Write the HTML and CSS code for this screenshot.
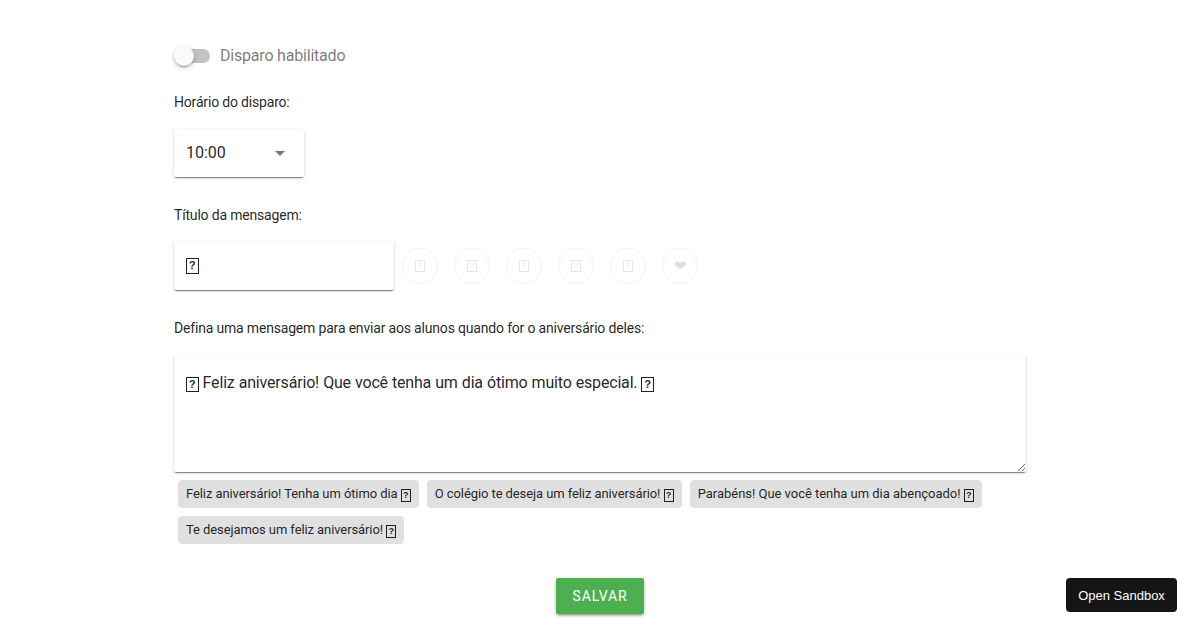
FILE: index.html
```html
<!DOCTYPE html>
<html lang="pt-BR">
<head>
<meta charset="utf-8">
<title>Disparo</title>
<link rel="stylesheet" href="styles.css">
</head>
<body>
<main class="form">
  <div class="toggle-row">
    <span class="switch"><span class="track"></span><span class="thumb"></span></span>
    <span class="toggle-label">Disparo habilitado</span>
  </div>
  <p class="label label-time">Horário do disparo:</p>
  <div class="paper select">
    <span>10:00</span>
    <svg class="arrow" viewBox="0 0 24 24" width="24" height="24"><path d="M7 10l5 5 5-5z"/></svg>
  </div>
  <p class="label label-title">Título da mensagem:</p>
  <div class="title-row">
    <div class="paper title-input"><span class="tofu">?</span></div>
    <div class="emojis">
      <span class="emoji"><span class="tofu">?</span></span>
      <span class="emoji"><span class="tofu">?</span></span>
      <span class="emoji"><span class="tofu">?</span></span>
      <span class="emoji"><span class="tofu">?</span></span>
      <span class="emoji"><span class="tofu">?</span></span>
      <span class="emoji emoji-heart">❤</span>
    </div>
  </div>
  <p class="label label-message">Defina uma mensagem para enviar aos alunos quando for o aniversário deles:</p>
  <div class="paper message"><span class="tofu">?</span> Feliz aniversário! Que você tenha um dia ótimo muito especial. <span class="tofu">?</span></div>
  <div class="chips">
    <span class="chip"><span>Feliz aniversário! Tenha um ótimo dia <span class="tofu">?</span></span></span>
    <span class="chip"><span>O colégio te deseja um feliz aniversário! <span class="tofu">?</span></span></span>
    <span class="chip chip-wide"><span>Parabéns! Que você tenha um dia abençoado! <span class="tofu">?</span></span></span>
    <span class="chip"><span>Te desejamos um feliz aniversário! <span class="tofu">?</span></span></span>
  </div>
  <div class="actions"><button class="save" type="button">Salvar</button></div>
</main>
<a class="sandbox">Open Sandbox</a>
</body>
</html>
```
FILE: styles.css
```css
* { box-sizing: border-box; }
html, body { margin: 0; height: 630px; overflow: hidden; background: #fff; }
body { font-family: Roboto, "Liberation Sans", sans-serif; color: rgba(0,0,0,.87); }
.form { width: 852px; margin: 0 auto; padding-top: 37px; display: flex; flex-direction: column; }
.toggle-row { display: flex; align-items: center; height: 38px; }
.switch { position: relative; display: block; width: 36px; height: 38px; margin-right: 10px; }
.track { position: absolute; left: 2px; top: 12px; width: 34px; height: 14px; border-radius: 7px; background: #000; opacity: .24; }
.thumb { position: absolute; left: 0; top: 9px; width: 20px; height: 20px; border-radius: 50%; background: #fafafa; box-shadow: 0 1px 5px rgba(0,0,0,.2), 0 2px 2px rgba(0,0,0,.14), 0 3px 1px -2px rgba(0,0,0,.12); }
.toggle-label { font-size: 16px; line-height: 24px; letter-spacing: -.2px; color: rgba(0,0,0,.54); }
.label { margin: 0; font-size: 14px; line-height: 20px; letter-spacing: -.18px; }
.label-time { margin-top: 17px; }
.label-title { margin-top: 28px; }
.label-message { margin-top: 28px; }
.paper { background: #fff; border-radius: 2px; box-shadow: 0 2px 1px -1px rgba(0,0,0,.4), 0 1px 3px rgba(0,0,0,.2), 0 0 1px rgba(0,0,0,.08); }
.select { margin-top: 17px; width: 130px; height: 48px; padding: 0 12px 2px; display: flex; align-items: center; justify-content: space-between; font-size: 16px; }
.arrow { fill: rgba(0,0,0,.54); margin-top: 2px; }
.title-row { margin-top: 17px; display: flex; align-items: center; }
.title-input { width: 220px; height: 48px; padding: 0 12px; display: flex; align-items: center; font-size: 16px; }
.emojis { display: flex; gap: 16px; margin-left: 8px; }
.emoji { width: 36px; height: 36px; border: 1px solid rgba(0,0,0,.06); border-radius: 50%; display: flex; align-items: center; justify-content: center; font-size: 13px; color: rgba(0,0,0,.1); }
.emoji-heart { font-size: 15px; color: rgba(0,0,0,.13); }
.tofu { display: inline-flex; align-items: center; justify-content: center; width: 1.12em; height: 1.38em; border: 1px solid currentColor; font-size: .7em; font-weight: 700; line-height: 1; letter-spacing: 0; font-family: "Liberation Sans", sans-serif; }
.message { margin-top: 17px; display: block; width: 852px; height: 117px; padding: 18px 12px 12px; overflow: auto; resize: vertical; font-size: 16px; line-height: 19px; letter-spacing: -.18px; word-spacing: .3px; }
.chips { display: flex; flex-wrap: wrap; gap: 8px; padding: 8px 4px 0; }
.chip { height: 28px; padding: 0 8px; border-radius: 4px; background: #e0e0e0; display: flex; align-items: center; font-size: 13px; letter-spacing: -.09px; white-space: nowrap; }
.chip-wide { letter-spacing: -.03px; }
.actions { display: flex; justify-content: center; margin-top: 34px; }
.save { width: 88px; height: 36px; border: 0; border-radius: 2px; background: #4caf50; color: #fff; font: 14px/1 Roboto, sans-serif; letter-spacing: .8px; text-transform: uppercase; box-shadow: 0 1px 5px rgba(0,0,0,.2), 0 2px 2px rgba(0,0,0,.14), 0 3px 1px -2px rgba(0,0,0,.12); }
.sandbox { position: fixed; left: 1066px; top: 578px; width: 111px; height: 34px; border-radius: 4px; background: #151515; color: #fff; display: flex; align-items: center; justify-content: center; font: 13px "Liberation Sans", sans-serif; }
```
